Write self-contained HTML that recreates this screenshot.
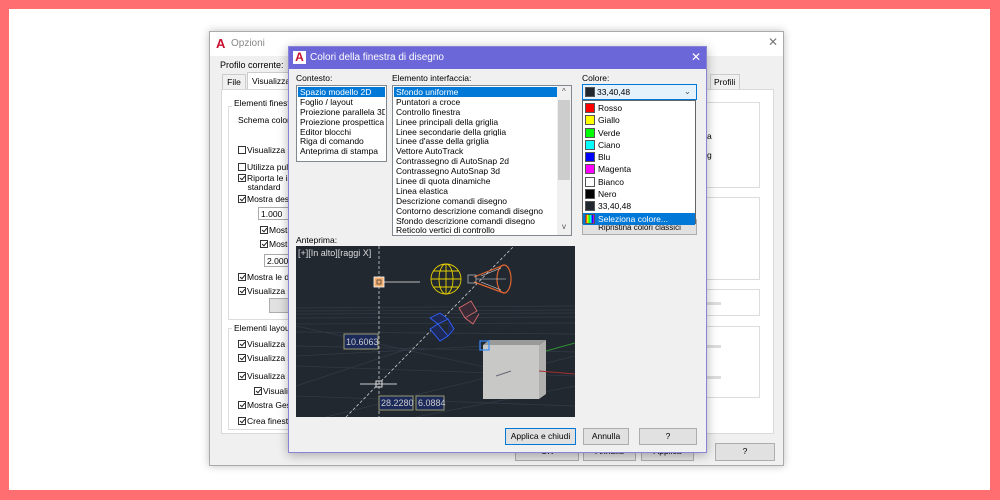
<!DOCTYPE html>
<html><head><meta charset="utf-8"><style>
*{box-sizing:border-box;margin:0;padding:0}
body{width:1000px;height:500px;background:#ff6e71;position:relative;overflow:hidden;font-family:"Liberation Sans",sans-serif;font-size:8.5px;color:#000}
.a{position:absolute}
.white{left:9px;top:9px;width:981px;height:481px;background:#fff}
.win{left:209px;top:31px;width:575px;height:435px;background:#f0f0f0;border:1px solid #aaa;box-shadow:0 0 8px rgba(0,0,0,.25)}
.cb{display:inline-block;width:8px;height:8px;border:1px solid #333;background:#fff;vertical-align:-1px;margin-right:1px;position:relative}
.cb.c::after{content:"";position:absolute;left:2px;top:0px;width:2px;height:4px;border:solid #222;border-width:0 1px 1px 0;transform:rotate(40deg)}
.gb{border:1px solid #dcdcdc}
.btn{background:#e1e1e1;border:1px solid #adadad;text-align:center;line-height:15px}
.list{background:#fff;border:1px solid #828790}
.list div{height:9.9px;line-height:10px;padding-left:2px;white-space:nowrap;overflow:hidden}
.sel{background:#0078d7;color:#fff}
.sw{display:inline-block;width:10px;height:10px;border:1px solid #555;vertical-align:-2px;margin-right:3px}
.dd div{height:12.3px;line-height:12px;padding-left:2px}
</style></head><body>
<div class="a white"></div>
<div class="a win">
 <div class="a" style="left:0;top:0;width:573px;height:24px;background:#fff"></div>
 <div class="a" style="left:6px;top:4px;font:bold 13px 'Liberation Sans';color:#c8102e">A</div>
 <div class="a" style="left:21px;top:6px;font-size:10px;color:#888">Opzioni</div>
 <div class="a" style="left:558px;top:3px;font-size:12px;color:#777">✕</div>
 <div class="a" style="left:10px;top:28px;font-size:9px">Profilo corrente:</div>
 <div class="a" style="left:12px;top:42px;width:24px;height:15px;border:1px solid #ccc;border-bottom:none;text-align:center;line-height:14px">File</div>
 <div class="a" style="left:37px;top:40px;width:50px;height:18px;border:1px solid #ccc;border-bottom:none;background:#fff;padding:3px 4px">Visualizza</div>
 <div class="a" style="left:500px;top:42px;width:30px;height:15px;border:1px solid #ccc;border-bottom:none;padding:2px 3px">Profili</div>
 <div class="a" style="left:11px;top:57px;width:553px;height:345px;background:#fff;border:1px solid #d9d9d9"></div>
 <div class="a gb" style="left:18px;top:74px;width:120px;height:214px"></div>
 <div class="a" style="left:22px;top:66px;background:#fff;padding:0 2px">Elementi finestra</div>
 <div class="a" style="left:28px;top:83px">Schema colori</div>
 <div class="a" style="left:28px;top:113px"><span class="cb"></span>Visualizza l</div>
 <div class="a" style="left:28px;top:130px"><span class="cb"></span>Utilizza puls</div>
 <div class="a" style="left:28px;top:142px;line-height:9px"><span class="cb c"></span>Riporta le i<br>&nbsp;&nbsp;&nbsp;&nbsp;standard</div>
 <div class="a" style="left:28px;top:162px"><span class="cb c"></span>Mostra des</div>
 <div class="a" style="left:48px;top:175px;width:40px;height:13px;border:1px solid #aaa;background:#fff;padding:1px 2px">1.000</div>
 <div class="a" style="left:50px;top:193px"><span class="cb c"></span>Mostr</div>
 <div class="a" style="left:50px;top:207px"><span class="cb c"></span>Mostr</div>
 <div class="a" style="left:54px;top:222px;width:30px;height:13px;border:1px solid #aaa;background:#fff;padding:1px 2px">2.000</div>
 <div class="a" style="left:28px;top:240px"><span class="cb c"></span>Mostra le d</div>
 <div class="a" style="left:28px;top:254px"><span class="cb c"></span>Visualizza s</div>
 <div class="a btn" style="left:59px;top:266px;width:30px;height:15px"></div>
 <div class="a gb" style="left:18px;top:296px;width:120px;height:102px"></div>
 <div class="a" style="left:22px;top:291px;background:#fff;padding:0 2px">Elementi layout</div>
 <div class="a" style="left:28px;top:307px"><span class="cb c"></span>Visualizza s</div>
 <div class="a" style="left:28px;top:321px"><span class="cb c"></span>Visualizza s</div>
 <div class="a" style="left:28px;top:339px"><span class="cb c"></span>Visualizza s</div>
 <div class="a" style="left:44px;top:354px"><span class="cb c"></span>Visuali</div>
 <div class="a" style="left:28px;top:368px"><span class="cb c"></span>Mostra Ges</div>
 <div class="a" style="left:28px;top:384px"><span class="cb c"></span>Crea finestr</div>
 <div class="a gb" style="left:470px;top:70px;width:80px;height:86px"></div>
 <div class="a" style="left:497px;top:99px">a</div>
 <div class="a" style="left:497px;top:118px">g</div>
 <div class="a gb" style="left:470px;top:165px;width:80px;height:83px"></div>
 <div class="a gb" style="left:470px;top:257px;width:80px;height:27px"></div>
 <div class="a" style="left:497px;top:270px;width:14px;height:3px;background:#ddd"></div>
 <div class="a gb" style="left:470px;top:294px;width:80px;height:72px"></div>
 <div class="a" style="left:497px;top:313px;width:14px;height:3px;background:#ddd"></div>
 <div class="a" style="left:497px;top:344px;width:14px;height:3px;background:#ddd"></div>
 <div class="a btn" style="left:305px;top:411px;width:64px;height:18px">OK</div>
 <div class="a btn" style="left:373px;top:411px;width:53px;height:18px">Annulla</div>
 <div class="a btn" style="left:431px;top:411px;width:53px;height:18px">Applica</div>
 <div class="a btn" style="left:505px;top:411px;width:60px;height:18px">?</div>
</div>

<div class="a" style="left:288px;top:46px;width:419px;height:407px;background:#f0f0f0;border:1px solid #8a84d6;box-shadow:0 2px 10px rgba(0,0,0,.3)">
 <div class="a" style="left:0;top:0;width:417px;height:22px;background:#6c67d8"></div>
 <div class="a" style="left:4px;top:4px;width:13px;height:13px;background:#fff;font:bold 12px 'Liberation Sans';color:#c8102e;text-align:center;line-height:13px">A</div>
 <div class="a" style="left:21px;top:5px;font-size:10px;color:#fff">Colori della finestra di disegno</div>
 <div class="a" style="left:402px;top:3px;font-size:12px;color:#fff">✕</div>
 <div class="a" style="left:7px;top:26px">Contesto:</div>
 <div class="a" style="left:103px;top:26px">Elemento interfaccia:</div>
 <div class="a" style="left:293px;top:26px">Colore:</div>
 <div class="a list" style="left:7px;top:38px;width:91px;height:77px;padding:1px">
  <div class="sel">Spazio modello 2D</div><div>Foglio / layout</div><div>Proiezione parallela 3D</div><div>Proiezione prospettica 3D</div><div>Editor blocchi</div><div>Riga di comando</div><div>Anteprima di stampa</div>
 </div>
 <div class="a list" style="left:103px;top:38px;width:180px;height:151px;padding:1px">
  <div class="sel" style="width:163px">Sfondo uniforme</div><div>Puntatori a croce</div><div>Controllo finestra</div><div>Linee principali della griglia</div><div>Linee secondarie della griglia</div><div>Linee d'asse della griglia</div><div>Vettore AutoTrack</div><div>Contrassegno di AutoSnap 2d</div><div>Contrassegno AutoSnap 3d</div><div>Linee di quota dinamiche</div><div>Linea elastica</div><div>Descrizione comandi disegno</div><div>Contorno descrizione comandi disegno</div><div>Sfondo descrizione comandi disegno</div><div>Reticolo vertici di controllo</div>
  <div class="a" style="left:164px;top:0;width:14px;height:149px;background:#f0f0f0"></div>
  <div class="a" style="left:165px;top:14px;width:12px;height:80px;background:#cdcdcd"></div>
  <div class="a" style="left:167px;top:1px;font-size:8px;color:#555">^</div>
  <div class="a" style="left:167px;top:136px;font-size:8px;color:#555">v</div>
 </div>
 <div class="a" style="left:293px;top:37px;width:115px;height:16px;background:#e5f1fb;border:1px solid #0078d7;padding:2px 2px"><span class="sw" style="background:#21282f;margin-right:2px"></span>33,40,48<span style="position:absolute;right:5px;top:1px;color:#555">⌄</span></div>
 <div class="a btn" style="left:293px;top:172px;width:115px;height:16px;font-size:8px">Ripristina colori classici</div>
 <div class="a dd" style="left:293px;top:53px;width:114px;height:124px;background:#fff;border:1px solid #646464;padding-top:1px">
  <div><span class="sw" style="background:#f00"></span>Rosso</div>
  <div><span class="sw" style="background:#ff0"></span>Giallo</div>
  <div><span class="sw" style="background:#0f0"></span>Verde</div>
  <div><span class="sw" style="background:#0ff"></span>Ciano</div>
  <div><span class="sw" style="background:#00f"></span>Blu</div>
  <div><span class="sw" style="background:#f0f"></span>Magenta</div>
  <div><span class="sw" style="background:#fff"></span>Bianco</div>
  <div><span class="sw" style="background:#000"></span>Nero</div>
  <div><span class="sw" style="background:#21282f"></span>33,40,48</div>
  <div class="sel"><span class="sw" style="background:linear-gradient(90deg,#f00,#ff0,#0f0,#0ff,#00f,#f0f)"></span>Seleziona colore...</div>
 </div>
 <div class="a" style="left:7px;top:188px">Anteprima:</div>
 <svg class="a" style="left:7px;top:199px" width="279" height="171" viewBox="0 0 279 171">
  <rect width="279" height="171" fill="#212830"/>
  <g stroke="#323b47" stroke-width="0.7" fill="none">
   <path d="M0 62 L279 60 M0 65 L279 64 M0 68 L279 67 M0 72 L279 71 M0 78 L279 77 M0 86 L279 88 M0 100 L279 106 M0 120 L279 130 M0 150 L279 160"/>
   <path d="M0 80 L230 130 M0 110 L190 100 M30 171 L279 110 M120 171 L279 140 M0 140 L120 100"/>
  </g>
  <line x1="50" y1="171" x2="218" y2="0" stroke="#ccc" stroke-width="0.8" stroke-dasharray="3,2"/>
  <line x1="83" y1="0" x2="83" y2="171" stroke="#ccc" stroke-width="0.8" stroke-dasharray="3,2"/>
  <line x1="88" y1="36" x2="124" y2="36" stroke="#bbb"/>
  <rect x="78" y="31" width="10" height="10" fill="#f5b070" stroke="#fff" stroke-width="0.8"/>
  <path d="M81 34h4v4h-4z" fill="none" stroke="#333" stroke-width="0.7"/>
  <g stroke="#e6d000" stroke-width="0.9" fill="none"><circle cx="150" cy="33" r="15"/><ellipse cx="150" cy="33" rx="7" ry="15"/><path d="M135 33h30M137 25h26M137 41h26M150 18v30"/></g>
  <g stroke="#e06530" stroke-width="1.2" fill="none"><ellipse cx="208" cy="33" rx="7" ry="14"/><path d="M208 19 L178 31 M208 47 L178 36"/></g>
  <g stroke="#ddd" stroke-width="0.6" fill="none"><rect x="172" y="29" width="8" height="8"/><path d="M180 33h30M185 30l20-8M185 36l20 8"/></g>
  <g stroke="#3060ff" stroke-width="0.9" fill="#1e2a55"><path d="M134 72l10-5 8 6-10 5z"/><path d="M142 78l10 12-8 5-10-12z M152 73l6 10-6 7"/></g>
  <g stroke="#e07070" stroke-width="0.8" fill="#3a2a35"><path d="M163 62l12-7 6 10-12 7z"/><path d="M169 72l8 6 6-10"/></g>
  <line x1="64" y1="138" x2="101" y2="138" stroke="#ccc"/>
  <rect x="80" y="135" width="6" height="6" fill="none" stroke="#ddd"/>
  <rect x="48" y="88" width="34" height="15" fill="#1c2a5a" stroke="#9a9a70"/>
  <text x="50" y="99" fill="#ccc" font-size="9" font-family="Liberation Sans">10.6063</text>
  <rect x="83" y="150" width="34" height="14" fill="#1c2a5a" stroke="#9a9a70"/>
  <text x="85" y="160" fill="#ccc" font-size="9" font-family="Liberation Sans">28.2280</text>
  <rect x="120" y="150" width="28" height="14" fill="#1c2a5a" stroke="#9a9a70"/>
  <text x="122" y="160" fill="#ccc" font-size="9" font-family="Liberation Sans">6.0884</text>
  <path d="M187 99 L193 94 L250 94 L243 99 Z" fill="#9a9a98"/>
  <path d="M243 99 L250 94 L250 148 L243 153 Z" fill="#b0b0ae"/>
  <rect x="187" y="99" width="56" height="54" fill="#c8c8c6"/>
  <line x1="200" y1="130" x2="215" y2="125" stroke="#667"/>
  <line x1="243" y1="125" x2="279" y2="128" stroke="#a03030"/>
  <line x1="250" y1="105" x2="279" y2="97" stroke="#309030"/>
  <rect x="184" y="95" width="9" height="9" fill="none" stroke="#3a8cff" stroke-width="1.2"/>
  <text x="2" y="10" fill="#ddd" font-size="9" font-family="Liberation Sans">[+][In alto][raggi X]</text>
 </svg>
 <div class="a btn" style="left:216px;top:381px;width:71px;height:17px;border:1px solid #0078d7;line-height:15px">Applica e chiudi</div>
 <div class="a btn" style="left:294px;top:381px;width:46px;height:17px">Annulla</div>
 <div class="a btn" style="left:350px;top:381px;width:58px;height:17px">?</div>
</div>
</body></html>
